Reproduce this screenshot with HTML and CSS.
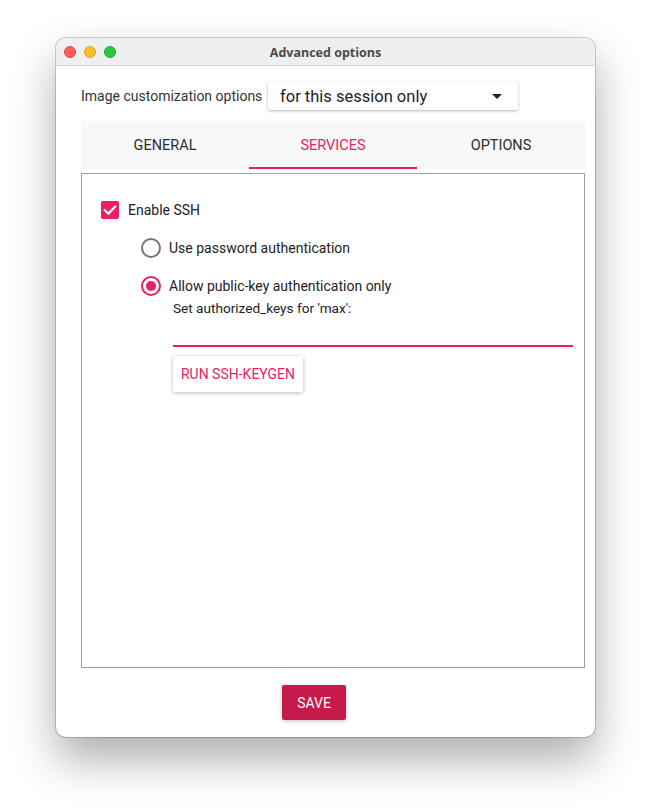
FILE: index.html
```html
<!DOCTYPE html>
<html>
<head>
<meta charset="utf-8">
<link rel="stylesheet" href="styles.css">
</head>
<body>
<div class="window">
  <div class="titlebar">
    <div class="lights">
      <span class="light red"></span>
      <span class="light yellow"></span>
      <span class="light green"></span>
    </div>
    <div class="title">Advanced options</div>
    <div></div>
  </div>
  <div class="content">
    <div class="custom-row">
      <span class="custom-label">Image customization options</span>
      <div class="select">
        <span>for this session only</span>
        <svg class="arrow" width="10" height="5" viewBox="0 0 10 5"><polygon points="0,0 10,0 5,5" fill="#222"/></svg>
      </div>
    </div>
    <div class="tabs">
      <div class="tab">GENERAL</div>
      <div class="tab active">SERVICES</div>
      <div class="tab">OPTIONS</div>
    </div>
    <div class="panel">
      <div class="check-row">
        <span class="checkbox">
          <svg width="18" height="18" viewBox="0 0 18 18"><path d="M3.8 9.2 L7.4 12.6 L14.2 5.6" fill="none" stroke="#fff" stroke-width="2.2" stroke-linecap="square"/></svg>
        </span>
        <span>Enable SSH</span>
      </div>
      <div class="radio-row first">
        <span class="radio"></span>
        <span>Use password authentication</span>
      </div>
      <div class="radio-row second">
        <span class="radio on"><span class="dot"></span></span>
        <span>Allow public-key authentication only</span>
      </div>
      <div class="keys">
        <div class="keys-label">Set authorized_keys for 'max':</div>
        <div class="keys-field"></div>
        <button class="keygen">RUN SSH-KEYGEN</button>
      </div>
    </div>
    <div class="footer">
      <button class="save">SAVE</button>
    </div>
  </div>
</div>
</body>
</html>
```

FILE: styles.css
```css
* { box-sizing: border-box; }
html, body { margin: 0; padding: 0; background: #ffffff; }
body {
  font-family: Roboto, "Liberation Sans", sans-serif;
  color: #222;
  padding: 38px 0 0 56px;
  min-height: 811px;
}
.window {
  width: 539px;
  height: 699px;
  border-radius: 10px;
  background: #fff;
  box-shadow: 0 0 0 1px rgba(0,0,0,0.18), 0 22px 45px rgba(0,0,0,0.33);
  overflow: hidden;
  display: flex;
  flex-direction: column;
}
.titlebar {
  height: 28px;
  flex: none;
  background: #eef0ef;
  border-bottom: 1px solid #d6d6d6;
  display: grid;
  grid-template-columns: 1fr auto 1fr;
  align-items: center;
}
.lights { display: flex; gap: 8px; padding-left: 8px; }
.light { width: 12px; height: 12px; border-radius: 50%; display: block; }
.red { background: #ff5f57; border: 0.5px solid #e0443e; }
.yellow { background: #febc2e; border: 0.5px solid #dea123; }
.green { background: #28c840; border: 0.5px solid #1aab29; }
.title {
  font-family: "Open Sans", Roboto, sans-serif;
  font-weight: 700;
  font-size: 12.5px;
  color: #4a4a4a;
  padding-top: 1px;
}
.content {
  padding: 16px 10px 0 25px;
  display: flex;
  flex-direction: column;
}
.custom-row {
  display: flex;
  align-items: center;
  height: 28px;
}
.custom-label {
  font-size: 14px;
  color: #333;
  width: 187px;
  white-space: nowrap;
}
.select {
  width: 250px;
  height: 28px;
  background: #fff;
  border-radius: 2px;
  box-shadow: 0 1px 3px rgba(0,0,0,0.3);
  display: flex;
  align-items: center;
  justify-content: space-between;
  padding: 0 16px 0 12px;
  font-size: 16.5px;
  color: #222;
}
.arrow { display: block; margin-top: 1px; }
.tabs {
  margin-top: 11px;
  height: 48px;
  background: #f8f8f8;
  display: grid;
  grid-template-columns: repeat(3, 1fr);
}
.tab {
  display: flex;
  align-items: center;
  justify-content: center;
  font-size: 14.5px;
  color: #2d2d2d;
  border-bottom: 2px solid transparent;
  padding-top: 2px;
}
.tab.active { color: #e91e63; border-bottom-color: #e91e63; }
.panel {
  margin-top: 4px;
  height: 495px;
  border: 1px solid #a0a0a0;
  padding: 27px 0 0 19px;
  display: flex;
  flex-direction: column;
}
.check-row {
  display: flex;
  align-items: center;
  gap: 9px;
  height: 18px;
  font-size: 14px;
  color: #222;
}
.checkbox {
  width: 18px;
  height: 18px;
  border-radius: 2px;
  background: #e91e63;
  display: block;
}
.checkbox svg { display: block; }
.radio-row {
  display: flex;
  align-items: center;
  gap: 8px;
  height: 20px;
  margin-left: 40px;
  font-size: 14px;
  color: #222;
}
.radio-row.first { margin-top: 19px; }
.radio-row.second { margin-top: 18px; }
.radio {
  width: 20px;
  height: 20px;
  border-radius: 50%;
  border: 2px solid #757575;
  display: flex;
  align-items: center;
  justify-content: center;
}
.radio.on { border-color: #e91e63; }
.dot { width: 10px; height: 10px; border-radius: 50%; background: #e91e63; }
.keys {
  margin-left: 72px;
  margin-top: 4px;
  display: flex;
  flex-direction: column;
  align-items: flex-start;
}
.keys-label {
  font-size: 13.6px;
  line-height: 16px;
  color: #222;
}
.keys-field {
  width: 400px;
  height: 31px;
  border-bottom: 2px solid #e91e63;
}
.keygen {
  margin-top: 9px;
  width: 130px;
  height: 36px;
  border: none;
  border-radius: 2px;
  background: #fff;
  box-shadow: 0 1px 4px rgba(0,0,0,0.28);
  font-family: Roboto, sans-serif;
  font-size: 14px;
  color: #e91e63;
  padding: 0;
}
.footer {
  padding-left: 201px;
  margin-top: 17px;
}
.save {
  width: 64px;
  height: 35px;
  border: none;
  border-radius: 2px;
  background: #c51a4a;
  color: #fff;
  font-family: Roboto, sans-serif;
  font-size: 14px;
  box-shadow: 0 1px 4px rgba(0,0,0,0.25);
  padding: 0;
}
```
